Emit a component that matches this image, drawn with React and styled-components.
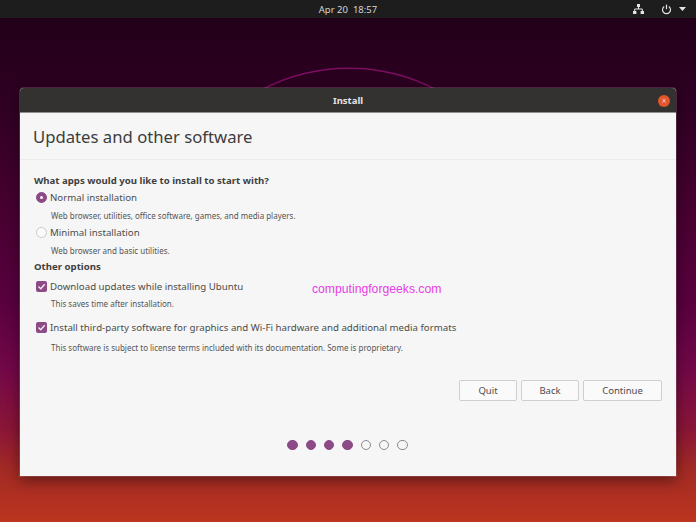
import React from 'react'
import styled, { createGlobalStyle } from 'styled-components'

const GlobalStyle = createGlobalStyle`
  html, body {
    margin: 0;
    padding: 0;
    width: 696px;
    height: 522px;
    overflow: hidden;
    font-family: "Noto Sans", "Open Sans", sans-serif;
  }
`

const Desktop = styled.div`
  position: relative;
  width: 696px;
  height: 522px;
  overflow: hidden;
  background: linear-gradient(
    180deg,
    #200018 0px,
    #2e0022 100px,
    #45002f 200px,
    #58003e 300px,
    #720848 370px,
    #8a1636 430px,
    #a22a24 470px,
    #bc351f 522px
  );
`

const TopBar = styled.header`
  position: relative;
  height: 18px;
  background: #1d1d1d;
  color: #d6d6d6;
  font-size: 9.5px;
  display: flex;
  align-items: center;
  justify-content: center;
`

const Clock = styled.span`
  white-space: pre;
`

const Tray = styled.div`
  position: absolute;
  top: 0;
  right: 10px;
  height: 18px;
  display: flex;
  align-items: center;
  gap: 16px;
`

const PowerGroup = styled.div`
  display: flex;
  align-items: center;
  gap: 7px;
`

const Arc = styled.svg`
  position: absolute;
  left: 240px;
  top: 60px;
`

const Window = styled.main`
  position: relative;
  margin: 70px 0 0 20px;
  width: 656px;
  height: 388px;
  border-radius: 4px 4px 0 0;
  background: #f6f6f6;
  box-shadow: 0 0 0 1px rgba(240, 215, 215, 0.18), 0 4px 14px rgba(0, 0, 0, 0.45);
  display: flex;
  flex-direction: column;
`

const TitleBar = styled.div`
  position: relative;
  height: 25px;
  flex: none;
  background: #333231;
  border-bottom: 1px solid #8f8f8f;
  border-radius: 4px 4px 0 0;
  color: #e4e4e4;
  font-size: 9.5px;
  font-weight: 700;
  display: flex;
  align-items: center;
  justify-content: center;
  box-sizing: border-box;
`

const CloseButton = styled.span`
  position: absolute;
  right: 6px;
  top: 7px;
  width: 12px;
  height: 12px;
  border-radius: 50%;
  background: #e2562a;
  color: #f5d5c8;
  font-size: 8px;
  line-height: 12px;
  text-align: center;
  font-weight: 400;
`

const Header = styled.div`
  height: 47px;
  flex: none;
  box-sizing: border-box;
  padding: 12px 0 0 13px;
  border-bottom: 1px solid #ececec;
`

const Heading = styled.h1`
  margin: 0;
  font-size: 16.7px;
  line-height: 24px;
  font-weight: 400;
  color: #3d3d3d;
`

const Content = styled.div`
  padding: 14px 0 0 14px;
  color: #4a4a4a;
`

const SectionTitle = styled.h2`
  margin: ${p => p.$top || 0}px 0 0;
  font-size: 9.65px;
  line-height: 14px;
  font-weight: 700;
  color: #3f3f3f;
`

const Option = styled.div`
  display: flex;
  align-items: center;
  gap: 3px;
  padding-left: 2px;
  height: 16px;
  margin-top: ${p => p.$top || 0}px;
  font-size: 9.7px;
  color: #4c4c4c;
`

const Radio = styled.span`
  width: 11px;
  height: 11px;
  box-sizing: border-box;
  border-radius: 50%;
  flex: none;
  display: flex;
  align-items: center;
  justify-content: center;
  background: ${p => (p.$checked ? '#8c4a87' : '#fbfbfb')};
  border: 1px solid ${p => (p.$checked ? '#8c4a87' : '#c9c9c9')};
  &::after {
    content: '';
    width: 3px;
    height: 3px;
    border-radius: 50%;
    background: ${p => (p.$checked ? '#f6f6f6' : 'transparent')};
  }
`

const Checkbox = styled.span`
  width: 11px;
  height: 11px;
  border-radius: 2px;
  flex: none;
  background: #8c4a87;
  display: flex;
  align-items: center;
  justify-content: center;
`

const Hint = styled.p`
  margin: ${p => p.$top || 0}px 0 0 17px;
  font-size: 8px;
  line-height: 12px;
  color: #555;
`

const Footer = styled.div`
  margin-top: 26px;
  padding-right: 14px;
  display: flex;
  justify-content: flex-end;
  gap: 4px;
`

const Button = styled.button`
  width: ${p => p.$width}px;
  height: 21px;
  padding: 0;
  box-sizing: border-box;
  border: 1px solid #cfcfcf;
  border-radius: 2px;
  background: #fafafa;
  font-family: inherit;
  font-size: 9.5px;
  color: #4c4c4c;
`

const Steps = styled.div`
  margin-top: 39px;
  display: flex;
  justify-content: center;
  gap: 8px;
  padding-right: 1px;
`

const Step = styled.span`
  width: 10.4px;
  height: 10.4px;
  box-sizing: border-box;
  border-radius: 50%;
  background: ${p => (p.$done ? '#8c4a87' : 'transparent')};
  border: 1px solid ${p => (p.$done ? '#8c4a87' : '#8d8d8d')};
`

const Watermark = styled.span`
  position: absolute;
  left: 292px;
  top: 194px;
  font-family: "Liberation Sans", Arial, sans-serif;
  font-size: 12.2px;
  color: #e83ce8;
`

const Tick = () => (
  <svg width="9" height="9" viewBox="0 0 9 9">
    <path d="M1.5 4.5 L3.7 6.7 L7.7 2.2" fill="none" stroke="#f4f0f4" strokeWidth="1.3" />
  </svg>
)

const NetworkIcon = () => (
  <svg width="13" height="10" viewBox="0 0 13 10">
    <path d="M5 0h3v3H5zM1 7h3.4v3H1zM8.6 7H12v3H8.6z" fill="#e4e4e4" />
    <path d="M6.5 3v2M2.7 7V5h7.6v2" fill="none" stroke="#e4e4e4" strokeWidth="1" />
  </svg>
)

const PowerIcon = () => (
  <svg width="11" height="11" viewBox="0 0 11 11">
    <path d="M3.2 2.4a4 4 0 1 0 4.6 0" fill="none" stroke="#e4e4e4" strokeWidth="1.2" />
    <path d="M5.5 .6v4.6" fill="none" stroke="#e4e4e4" strokeWidth="1.2" />
  </svg>
)

const Caret = () => (
  <svg width="7" height="4" viewBox="0 0 7 4">
    <path d="M0 0h7L3.5 4z" fill="#e4e4e4" />
  </svg>
)

const App = () => {
  const steps = [true, true, true, true, false, false, false]
  return (
    <Desktop>
      <GlobalStyle />
      <TopBar>
        <Clock>Apr 20  18:57</Clock>
        <Tray>
          <NetworkIcon />
          <PowerGroup>
            <PowerIcon />
            <Caret />
          </PowerGroup>
        </Tray>
      </TopBar>
      <Arc width="220" height="30" viewBox="0 0 220 30">
        <path d="M23 29 A188 188 0 0 1 195 29" fill="none" stroke="#7d0d60" strokeWidth="1.4" />
      </Arc>
      <Window>
        <TitleBar>
          Install
          <CloseButton>×</CloseButton>
        </TitleBar>
        <Header>
          <Heading>Updates and other software</Heading>
        </Header>
        <Content>
          <SectionTitle>What apps would you like to install to start with?</SectionTitle>
          <Option $top={1}>
            <Radio $checked />
            Normal installation
          </Option>
          <Hint $top={5}>Web browser, utilities, office software, games, and media players.</Hint>
          <Option $top={2}>
            <Radio />
            Minimal installation
          </Option>
          <Hint $top={5}>Web browser and basic utilities.</Hint>
          <SectionTitle $top={3}>Other options</SectionTitle>
          <Option $top={4}>
            <Checkbox><Tick /></Checkbox>
            Download updates while installing Ubuntu
          </Option>
          <Hint $top={4}>This saves time after installation.</Hint>
          <Option $top={9}>
            <Checkbox><Tick /></Checkbox>
            Install third-party software for graphics and Wi-Fi hardware and additional media formats
          </Option>
          <Hint $top={7}>This software is subject to license terms included with its documentation. Some is proprietary.</Hint>
        </Content>
        <Footer>
          <Button $width={58}>Quit</Button>
          <Button $width={58}>Back</Button>
          <Button $width={79}>Continue</Button>
        </Footer>
        <Steps>
          {steps.map((done, i) => (
            <Step key={i} $done={done} />
          ))}
        </Steps>
        <Watermark>computingforgeeks.com</Watermark>
      </Window>
    </Desktop>
  )
}

export default App
